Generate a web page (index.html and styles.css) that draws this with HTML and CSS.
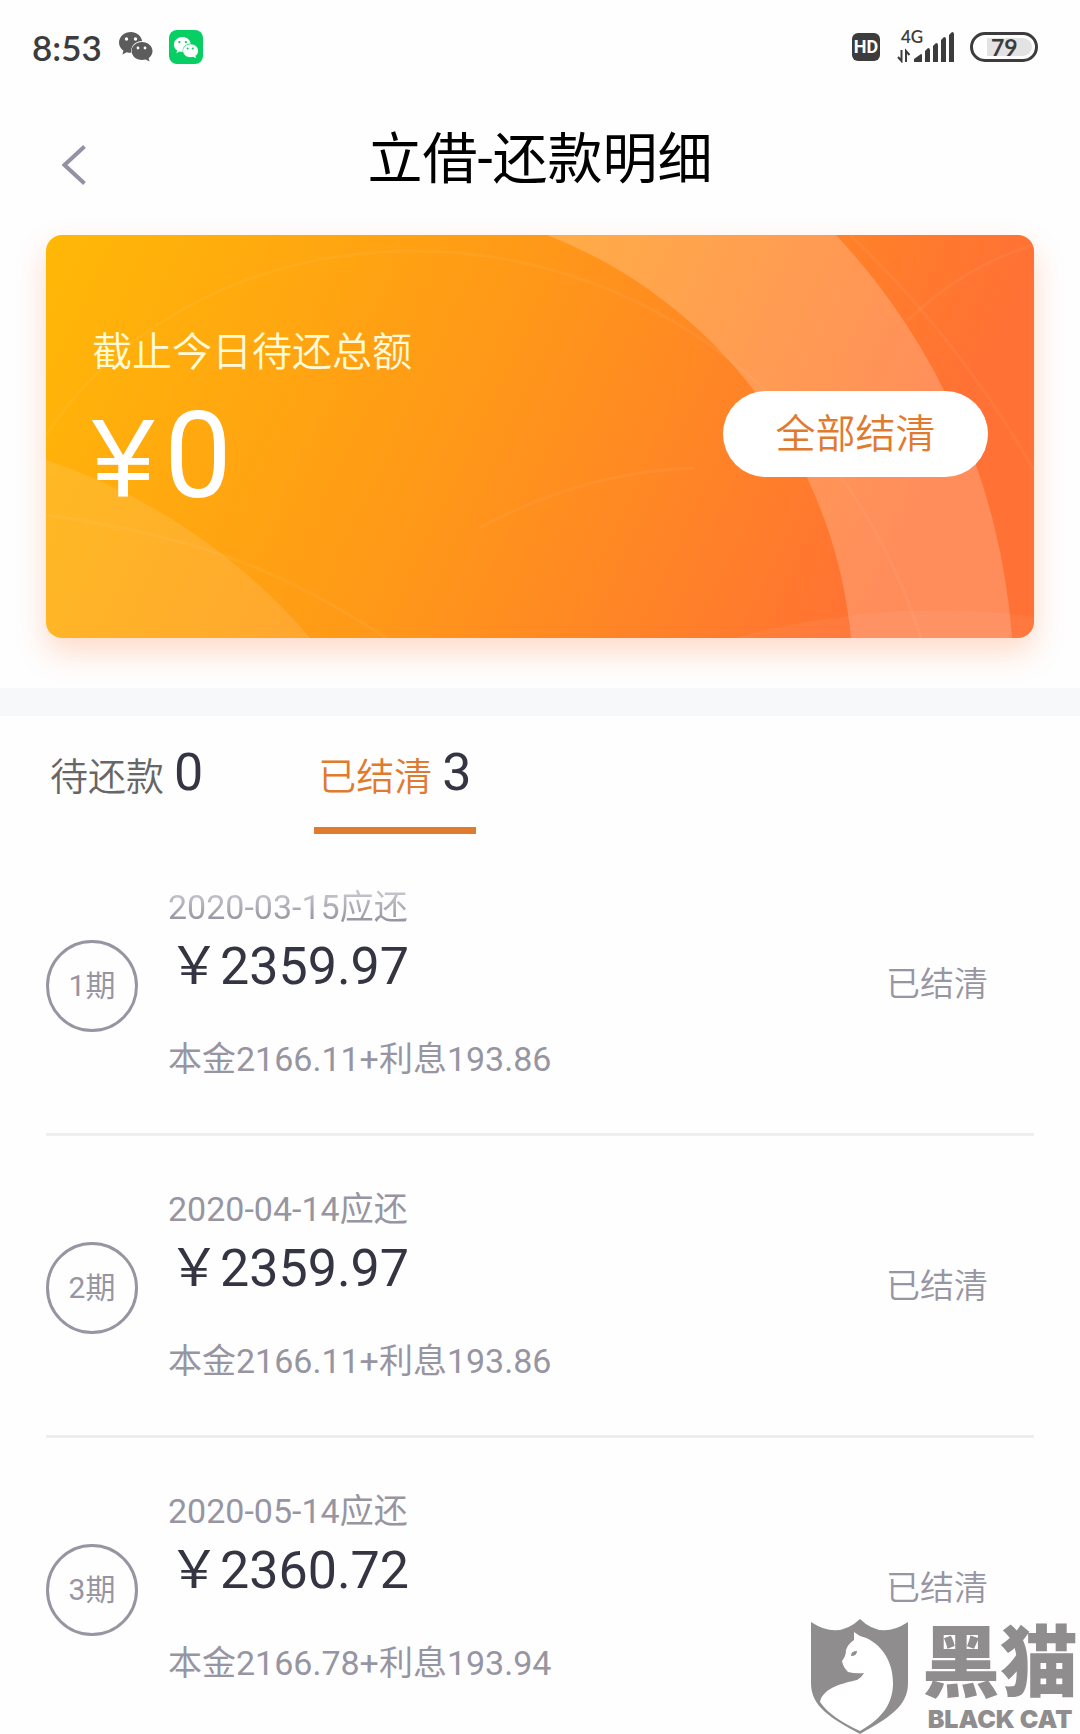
FILE: index.html
```
<!DOCTYPE html>
<html lang="zh-CN">
<head>
  <meta charset="UTF-8">
  <meta name="viewport" content="width=device-width, initial-scale=1.0">
  <title>立借-还款明细</title>
  <link rel="stylesheet" href="styles.css">
</head>
<body>
  <div class="status-bar">
    <div class="status-left">
      <span class="clock">8:53</span>
      <svg class="icon-chat" viewBox="0 0 34 30" aria-hidden="true">
        <path fill="#5c5c5c" d="M12 0C5.400 0 0 4.600 0 10.600c0 3.300 1.700 6.200 4.400 8.100L3.400 22.600l4.400-2.300c1.400.4 2.900.6 4.400.5C11.200 14.500 16.200 8.900 23.200 8.900 22 3.800 17.500 0 12 0z"/>
        <path fill="#5c5c5c" d="M23 10c-5.800 0-10.400 4-10.400 9s4.600 9 10.400 9c1.300 0 2.500-.2 3.600-.5l4 2.100-1-3.400c2.400-1.600 3.900-4.200 3.900-7.200 0-5-4.700-9-10.500-9z"/>
        <circle cx="7.500" cy="7" r="1.700" fill="#fff"/><circle cx="16.500" cy="7" r="1.700" fill="#fff"/>
        <circle cx="19" cy="16" r="1.400" fill="#fff"/><circle cx="26" cy="16" r="1.400" fill="#fff"/>
      </svg>
      <svg class="icon-app" viewBox="0 0 34 34" aria-hidden="true">
        <rect width="34" height="34" rx="8" fill="#07cf63"/>
        <g transform="translate(5 7) scale(.72)">
          <path fill="#fff" d="M12 0C5.400 0 0 4.600 0 10.600c0 3.300 1.700 6.200 4.400 8.100L3.400 22.600l4.400-2.300c1.400.4 2.900.6 4.400.5C11.200 14.500 16.200 8.900 23.200 8.900 22 3.800 17.500 0 12 0z"/>
          <path fill="#fff" d="M23 10c-5.800 0-10.400 4-10.400 9s4.600 9 10.400 9c1.300 0 2.500-.2 3.600-.5l4 2.100-1-3.400c2.400-1.600 3.900-4.200 3.900-7.200 0-5-4.700-9-10.500-9z"/>
          <circle cx="7.500" cy="7" r="1.600" fill="#07cf63"/><circle cx="16.500" cy="7" r="1.600" fill="#07cf63"/>
          <circle cx="19" cy="16" r="1.400" fill="#07cf63"/><circle cx="26" cy="16" r="1.400" fill="#07cf63"/>
        </g>
      </svg>
    </div>
    <div class="status-right">
      <span class="hd">HD</span>
      <span class="signal">
        <span class="network">4G</span>
        <svg class="icon-signal" viewBox="0 0 58 32" aria-hidden="true">
          <g fill="#3c3c3c">
            <path d="M17 31v-3l7-5q1 0 1 1v7z"/>
            <path d="M28 31V20l3-3q2 0 2 2v12z"/>
            <path d="M36 31V15l3-3q2 0 2 2v17z"/>
            <path d="M44 31V9l3-3q2 0 2 2v23z"/>
            <path d="M52 31V4l3-3q2 0 2 2v28z"/>
          </g>
          <path d="M4.500 19v11L1 26M9 31V20l3.500 4" fill="none" stroke="#3c3c3c" stroke-width="2"/>
        </svg>
      </span>
      <span class="battery"><span class="battery-level">79</span></span>
    </div>
  </div>

  <header class="page-header">
    <button type="button" class="back" aria-label="返回">
      <svg viewBox="0 0 24 40" aria-hidden="true">
        <path d="M22.500 1.500L2.500 20l20 18.500" fill="none" stroke="#9391a3" stroke-width="4"/>
      </svg>
    </button>
    <h1 class="page-title">立借-还款明细</h1>
  </header>

  <main>
    <section class="card">
      <svg class="card-art" viewBox="0 0 988 403" preserveAspectRatio="none" aria-hidden="true">
        <path fill="#fff" fill-opacity=".2" d="M501 0A481 481 0 0 1 805 403H966A658 658 0 0 0 790 0z"/>
        <path fill="#fff" fill-opacity=".11" d="M0 225A593 593 0 0 1 264 403H0z"/>
        <path fill="#fff" fill-opacity=".05" d="M718 395Q860 364 988 382V403H690z"/>
        <g fill="none" stroke="#fff" stroke-opacity=".05" stroke-width="3">
          <path d="M0 200C80 80 220 16 367 16C600 16 800 170 875 403"/>
          <path d="M433 293Q540 236 649 233"/>
          <path d="M804 0Q910 100 988 235"/>
          <path d="M862 85Q920 30 988 10"/>
          <path d="M0 280C140 300 230 330 340 403"/>
        </g>
      </svg>
      <div class="summary">
        <p class="summary-label">截止今日待还总额</p>
        <p class="summary-amount"><span class="currency">¥</span>0</p>
      </div>
      <button type="button" class="settle-btn">全部结清</button>
    </section>

    <nav class="tabs">
      <button type="button" class="tab">待还款<span class="count">0</span></button>
      <button type="button" class="tab active">已结清<span class="count">3</span></button>
    </nav>

    <ul class="bills">
      <li class="bill">
        <span class="period">1期</span>
        <div class="bill-info">
          <p class="due first">2020-03-15应还</p>
          <p class="amount">￥2359.97</p>
          <p class="detail">本金2166.11+利息193.86</p>
        </div>
        <span class="state">已结清</span>
      </li>
      <li class="bill">
        <span class="period">2期</span>
        <div class="bill-info">
          <p class="due">2020-04-14应还</p>
          <p class="amount">￥2359.97</p>
          <p class="detail">本金2166.11+利息193.86</p>
        </div>
        <span class="state">已结清</span>
      </li>
      <li class="bill">
        <span class="period">3期</span>
        <div class="bill-info">
          <p class="due">2020-05-14应还</p>
          <p class="amount">￥2360.72</p>
          <p class="detail">本金2166.78+利息193.94</p>
        </div>
        <span class="state">已结清</span>
      </li>
    </ul>
  </main>

  <div class="watermark">
    <svg class="watermark-logo" viewBox="0 0 97 115" aria-hidden="true">
      <path fill="#8f8d8e" d="M0 3Q27 21 49 0Q70 21 97 3V64C97 88 77 99 49 115C20 99 0 88 0 64z"/>
      <path fill="#fff" d="M43 13l6 4C66 21 82 38 82 64C82 84 72 99 49 112C32 104 17 95 9 83C12 68 34 64 46 61Q51 58 53 54Q45 55 37 53Q32 48 31 42Q35 37 35 31Q37 25 43 21z"/>
      <path fill="#8f8d8e" d="M40 37q0-5 6-5q0 5-6 5z"/>
    </svg>
    <div class="watermark-text">
      <span class="watermark-name">黑猫</span>
      <span class="watermark-sub">BLACK CAT</span>
    </div>
  </div>
</body>
</html>
```
FILE: styles.css
```
:root {
  --orange: #e07a2e;
  --text-dark: #343442;
  --text-light: #9795a2;
  --status: #3c3c3c;
}

* {
  box-sizing: border-box;
  margin: 0;
  padding: 0;
}

body {
  position: relative;
  min-height: 100vh;
  background-color: #fefefe;
  color: var(--text-dark);
  font-family: Roboto, "Noto Sans CJK SC", sans-serif;
}

button {
  border: none;
  background: none;
  font-family: inherit;
  cursor: pointer;
}

/* system bar */
.status-bar {
  display: flex;
  justify-content: space-between;
  height: 94px;
  padding: 0 42px 0 32px;
  color: var(--status);
  font-family: Lato, sans-serif;
}

.status-left,
.status-right {
  display: flex;
  align-items: center;
  height: 94px;
}

.clock {
  margin-right: 17px;
  font-size: 35px;
  font-weight: 600;
}

.icon-chat {
  width: 34px;
  height: 30px;
  margin-right: 16px;
}

.icon-app {
  width: 34px;
  height: 34px;
}

.hd {
  width: 28px;
  border-radius: 6px;
  background-color: var(--status);
  color: #fff;
  font-family: Roboto, sans-serif;
  font-size: 18px;
  font-weight: 700;
  line-height: 28px;
  text-align: center;
}

.signal {
  position: relative;
  margin: 0 15px 0 17px;
}

.icon-signal {
  display: block;
  width: 58px;
  height: 32px;
}

.network {
  position: absolute;
  top: -3px;
  left: 4px;
  font-size: 17px;
  font-weight: 600;
  line-height: 17px;
}

.battery {
  width: 68px;
  height: 30px;
  padding: 3px;
  border: 3px solid var(--status);
  border-radius: 15px;
}

.battery-level {
  display: block;
  height: 18px;
  margin-left: 11px;
  padding-left: 4px;
  border-radius: 0 9px 9px 0;
  background-color: #e3e3e3;
  font-size: 23px;
  font-weight: 700;
  line-height: 18px;
}

.page-header {
  display: grid;
  grid-template-columns: 56px 1fr 56px;
  align-items: start;
  padding: 23px 46px 22px;
}

.back {
  display: flex;
  align-items: center;
  justify-content: center;
  height: 96px;
}

.back svg {
  width: 24px;
  height: 40px;
}

.page-title {
  color: #000;
  font-size: 55px;
  font-weight: 400;
  line-height: 84px;
  text-align: center;
}

/* total card */
.card {
  position: relative;
  display: flex;
  align-items: center;
  justify-content: space-between;
  margin: 0 46px 50px;
  padding: 94px 46px 99px;
  border-radius: 16px;
  background: linear-gradient(115deg, #ffb806 0%, #ff9918 42%, #ff7134 85%);
  box-shadow: 0 14px 30px rgba(255, 112, 40, 0.25);
}

.card-art {
  position: absolute;
  inset: 0;
  width: 100%;
  height: 100%;
  border-radius: 16px;
}

.summary {
  position: relative;
  padding-bottom: 18px;
  color: #fff;
}

.summary-label {
  margin-bottom: 14px;
  color: #fffbd9;
  font-size: 40px;
  font-weight: 350;
  line-height: 48px;
}

.summary-amount {
  font-size: 120px;
  line-height: 130px;
}

.currency {
  margin-right: 10px;
  font-family: "Liberation Sans", Arial, sans-serif;
  font-size: 112px;
  line-height: 112px;
}

.settle-btn {
  position: relative;
  width: 265px;
  height: 86px;
  padding-bottom: 6px;
  border-radius: 43px;
  background-color: #fff;
  color: var(--orange);
  font-size: 40px;
  font-weight: 350;
}

.tabs {
  display: flex;
  gap: 107px;
  padding: 0 46px;
  border-top: 28px solid #f6f8fa;
}

.tab {
  display: flex;
  align-items: baseline;
  gap: 10px;
  padding: 25px 4px 22px;
  border-bottom: 7px solid transparent;
  color: #666;
  font-size: 38px;
  font-weight: 350;
}

.tab.active {
  border-bottom-color: var(--orange);
  color: var(--orange);
}

.count {
  color: var(--text-dark);
  font-size: 52px;
  font-weight: 400;
  line-height: 64px;
}

/* repayment list */
.bills {
  padding: 0 46px;
  list-style: none;
}

.bill {
  display: flex;
  align-items: center;
  padding: 51px 46px 52px 0;
  border-bottom: 3px solid #eeeef0;
}

.bill:last-child {
  padding-bottom: 0;
  border-bottom: none;
}

.period {
  width: 92px;
  height: 92px;
  margin: 6px 30px 0 0;
  border: 3px solid var(--text-light);
  border-radius: 50%;
  color: var(--text-light);
  font-size: 30px;
  line-height: 86px;
  text-align: center;
}

.bill-info {
  flex: 1;
}

.due,
.detail {
  color: var(--text-light);
  font-size: 34px;
  line-height: 44px;
}

.due.first {
  background: linear-gradient(#c4c3cb 20%, #9795a2 80%);
  background-clip: text;
  color: transparent;
}

.amount {
  margin-bottom: 32px;
  font-size: 52px;
  line-height: 76px;
}

.state {
  margin-bottom: 4px;
  color: var(--text-light);
  font-size: 34px;
  font-weight: 350;
}

.watermark {
  position: absolute;
  right: 2px;
  bottom: 0;
  display: flex;
  align-items: flex-end;
  gap: 14px;
  color: #8f8d8e;
}

.watermark-logo {
  width: 97px;
  height: 115px;
}

.watermark-text {
  display: flex;
  flex-direction: column;
  align-items: center;
}

.watermark-name {
  font-size: 78px;
  font-weight: 900;
  line-height: 78px;
}

.watermark-sub {
  font-family: Inter, sans-serif;
  font-size: 25px;
  font-weight: 900;
  line-height: 30px;
}
```
